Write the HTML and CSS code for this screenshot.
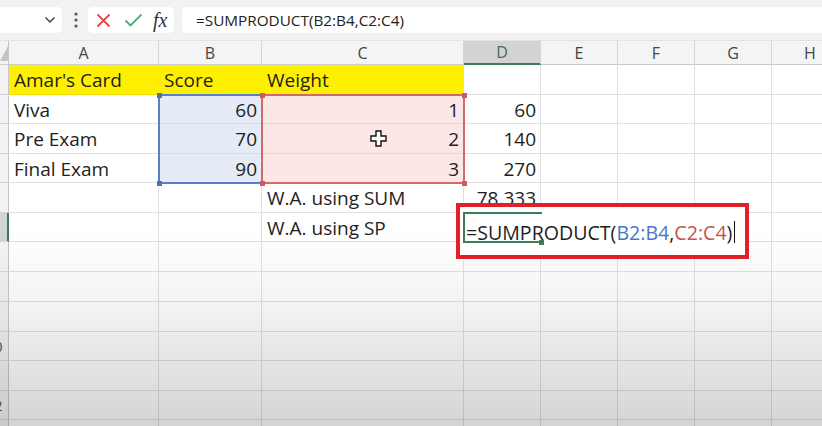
FILE: index.html
```html
<!DOCTYPE html>
<html>
<head>
<meta charset="utf-8">
<link rel="stylesheet" href="styles.css">
</head>
<body>
<div class="toolbar">
  <div class="namebox">
    <svg class="chev" width="12" height="8" viewBox="0 0 12 8"><polyline points="1.5,1.5 6,6 10.5,1.5" fill="none" stroke="#444" stroke-width="1.5"/></svg>
  </div>
  <div class="dots">
    <svg width="4" height="16" viewBox="0 0 4 16"><circle cx="2" cy="2" r="1.6" fill="#555"/><circle cx="2" cy="8" r="1.6" fill="#555"/><circle cx="2" cy="14" r="1.6" fill="#555"/></svg>
  </div>
  <div class="btns">
    <svg class="ic-x" width="15" height="15" viewBox="0 0 15 15"><path d="M1.5 1.5 L13.5 13.5 M13.5 1.5 L1.5 13.5" stroke="#e5484d" stroke-width="1.8" fill="none"/></svg>
    <svg class="ic-ok" width="19" height="15" viewBox="0 0 19 15"><polyline points="1.5,7.5 6.5,12.5 17.5,1.5" stroke="#4fae7b" stroke-width="1.8" fill="none"/></svg>
    <span class="fx">fx</span>
  </div>
  <div class="fbar">=SUMPRODUCT(B2:B4,C2:C4)</div>
</div>

<div class="sheet">
  <div class="row hdr">
    <div class="c corner"><svg width="9" height="17" viewBox="0 0 9 17"><polygon points="9,0 9,17 0,17" fill="#c3c3c3"/></svg></div>
    <div class="c">A</div><div class="c">B</div><div class="c">C</div><div class="c d">D</div><div class="c">E</div><div class="c">F</div><div class="c">G</div><div class="c">H</div>
  </div>
  <div class="row h30">
    <div class="c rh"></div>
    <div class="c y">Amar's Card</div><div class="c y">Score</div><div class="c y">Weight</div><div class="c"></div><div class="c"></div><div class="c"></div><div class="c"></div><div class="c"></div>
  </div>
  <div class="row h29">
    <div class="c rh"></div>
    <div class="c">Viva</div><div class="c num sb">60</div><div class="c num sr">1</div><div class="c num">60</div><div class="c"></div><div class="c"></div><div class="c"></div><div class="c"></div>
  </div>
  <div class="row h30">
    <div class="c rh"></div>
    <div class="c">Pre Exam</div><div class="c num sb">70</div><div class="c num sr">2</div><div class="c num">140</div><div class="c"></div><div class="c"></div><div class="c"></div><div class="c"></div>
  </div>
  <div class="row h29">
    <div class="c rh"></div>
    <div class="c">Final Exam</div><div class="c num sb">90</div><div class="c num sr">3</div><div class="c num">270</div><div class="c"></div><div class="c"></div><div class="c"></div><div class="c"></div>
  </div>
  <div class="row h30">
    <div class="c rh"></div>
    <div class="c"></div><div class="c"></div><div class="c">W.A. using SUM</div><div class="c num">78.333</div><div class="c"></div><div class="c"></div><div class="c"></div><div class="c"></div>
  </div>
  <div class="row h29">
    <div class="c rh act"></div>
    <div class="c"></div><div class="c"></div><div class="c">W.A. using SP</div><div class="c"></div><div class="c"></div><div class="c"></div><div class="c"></div><div class="c"></div>
  </div>
  <div class="row h30">
    <div class="c rh"></div>
    <div class="c"></div><div class="c"></div><div class="c"></div><div class="c"></div><div class="c"></div><div class="c"></div><div class="c"></div><div class="c"></div>
  </div>
  <div class="row h30">
    <div class="c rh"></div>
    <div class="c"></div><div class="c"></div><div class="c"></div><div class="c"></div><div class="c"></div><div class="c"></div><div class="c"></div><div class="c"></div>
  </div>
  <div class="row h30">
    <div class="c rh"></div>
    <div class="c"></div><div class="c"></div><div class="c"></div><div class="c"></div><div class="c"></div><div class="c"></div><div class="c"></div><div class="c"></div>
  </div>
  <div class="row h29">
    <div class="c rh"><span>10</span></div>
    <div class="c"></div><div class="c"></div><div class="c"></div><div class="c"></div><div class="c"></div><div class="c"></div><div class="c"></div><div class="c"></div>
  </div>
  <div class="row h30">
    <div class="c rh"><span>11</span></div>
    <div class="c"></div><div class="c"></div><div class="c"></div><div class="c"></div><div class="c"></div><div class="c"></div><div class="c"></div><div class="c"></div>
  </div>
  <div class="row h29">
    <div class="c rh"><span>12</span></div>
    <div class="c"></div><div class="c"></div><div class="c"></div><div class="c"></div><div class="c"></div><div class="c"></div><div class="c"></div><div class="c"></div>
  </div>
  <div class="row h30">
    <div class="c rh"></div>
    <div class="c"></div><div class="c"></div><div class="c"></div><div class="c"></div><div class="c"></div><div class="c"></div><div class="c"></div><div class="c"></div>
  </div>

  <div class="range range-b"><i class="hd tl"></i><i class="hd bl"></i></div>
  <div class="range range-r"><i class="hd tl"></i><i class="hd tr"></i><i class="hd bl"></i><i class="hd br"></i></div>
  <svg class="cursor" width="17" height="17" viewBox="0 0 17 17"><path d="M6 1 H11 V6 H16 V11 H11 V16 H6 V11 H1 V6 H6 Z" fill="#fff" stroke="#111" stroke-width="1.4"/></svg>

  <div class="shade"></div>

  <div class="callout">
    <div class="formula">=SUMPRODUCT(<span class="rb">B2:B4</span>,<span class="rr">C2:C4</span>)<span class="caret"></span></div>
  </div>
  <div class="active"><i class="fill-h"></i></div>
</div>
</body>
</html>
```
FILE: styles.css
```css
* { box-sizing: border-box; margin: 0; padding: 0; }

body {
  width: 822px;
  height: 426px;
  overflow: hidden;
  background: #fff;
  font-family: "Open Sans", "Liberation Sans", sans-serif;
  color: #1e1e1e;
}

/* ---------- formula toolbar ---------- */
.toolbar {
  height: 41px;
  background: #f2f2f2;
  border-bottom: 1px solid #e3e3e3;
  display: flex;
  align-items: center;
}
.namebox {
  width: 62px;
  height: 26px;
  background: #fff;
  border-radius: 0 5px 5px 0;
  display: flex;
  align-items: center;
  justify-content: flex-end;
  padding-right: 6px;
}
.dots {
  width: 12px;
  margin-left: 8px;
  display: flex;
  justify-content: center;
}
.btns {
  margin-left: 6px;
  width: 86px;
  height: 26px;
  background: #fff;
  border-radius: 5px;
  display: flex;
  align-items: center;
  padding-left: 8px;
}
.ic-ok { margin-left: 13px; }
.fx {
  margin-left: 10px;
  font-family: "Liberation Serif", "DejaVu Serif", serif;
  font-style: italic;
  font-size: 20px;
  color: #333;
  line-height: 1;
}
.fbar {
  margin-left: 8px;
  flex: 1;
  height: 26px;
  background: #fff;
  border-radius: 5px 0 0 5px;
  padding-left: 14px;
  display: flex;
  align-items: center;
  font-size: 15.3px;
  color: #222;
  white-space: nowrap;
}

/* ---------- grid ---------- */
.sheet { position: relative; height: 385px; overflow: hidden; }
.row {
  display: grid;
  grid-template-columns: 9px 150px 103px 202px 77px 77px 77px 77px 77px;
}
.h30 { height: 30px; }
.h29 { height: 29px; }
.c {
  border-right: 1px solid #e0e0e0;
  border-bottom: 1px solid #e0e0e0;
  display: flex;
  align-items: center;
  padding: 1px 5px 0;
  font-size: 19px;
  white-space: nowrap;
  overflow: hidden;
}
.num { justify-content: flex-end; padding-right: 4px; }
.y { background: #fff000; border-right-color: transparent; border-bottom-color: #f2e400; }
.sb { background: #e5ebf7; border-bottom-color: #d3dcee; }
.sr { background: #fce6e6; border-bottom-color: #eed3d3; }

.rh {
  background: #f3f3f3;
  border-right: 1px solid #c6c6c6;
  border-bottom-color: #d6d6d6;
  padding: 0;
  font-size: 15px;
  color: #555;
}
.rh span { flex: none; width: 30px; margin-left: -21px; text-align: center; }
.rh.act { background: #d3d3d3; border-right: 2px solid #3e7a58; }

.hdr { height: 24px; }
.hdr .c {
  background: #f4f4f4;
  border-right: 1px solid #d5d5d5;
  border-bottom: 1px solid #cbcbcb;
  justify-content: center;
  font-size: 16px;
  color: #444;
  padding: 0;
}
.hdr .corner { align-items: flex-end; justify-content: flex-start; padding-bottom: 2px; border-right-color: #c6c6c6; }
.hdr .d { background: #d3d3d3; border-bottom: 2px solid #3f7a59; color: #44705a; }

/* ---------- overlays ---------- */
.range { position: absolute; top: 53px; height: 90px; }
.range-b { left: 158px; width: 105px; border: 2px solid #5a7fc9; }
.range-r { left: 261px; width: 204px; border: 2px solid #d36a6a; }
.hd { position: absolute; width: 5px; height: 5px; }
.range-b .hd { background: #4a70c0; }
.range-r .hd { background: #cf5b5b; }
.tl { left: -3.5px; top: -3.5px; }
.tr { right: -3.5px; top: -3.5px; }
.bl { left: -3.5px; bottom: -3.5px; }
.br { right: -3.5px; bottom: -3.5px; }

.cursor { position: absolute; left: 370px; top: 89px; }

.shade {
  position: absolute;
  left: 0; right: 0; top: 190px; bottom: 0;
  background: linear-gradient(to bottom, rgba(0,0,0,0) 0%, rgba(0,0,0,0.05) 40%, rgba(0,0,0,0.17) 100%);
  pointer-events: none;
}

.callout {
  position: absolute;
  left: 456px;
  top: 162px;
  width: 293px;
  height: 56px;
  border: 4.5px solid #e1202a;
  background: #fff;
  display: flex;
  align-items: center;
  padding-left: 6px;
  padding-top: 2px;
}
.formula { font-size: 19.6px; white-space: nowrap; color: #1e1e1e; display: flex; align-items: center; }
.rb { color: #4a78c6; }
.rr { color: #c8524c; }
.caret { display: inline-block; width: 1px; height: 22px; background: #111; margin-left: 2px; }

.active {
  position: absolute;
  left: 463px;
  top: 171px;
  width: 79px;
  height: 31px;
  border-left: 2px solid #3f7a59;
  border-top: 2px solid #3f7a59;
  border-bottom: 2px solid #3f7a59;
}
.fill-h { position: absolute; right: -2px; bottom: -4px; width: 5px; height: 5px; background: #3f7a59; }
```
